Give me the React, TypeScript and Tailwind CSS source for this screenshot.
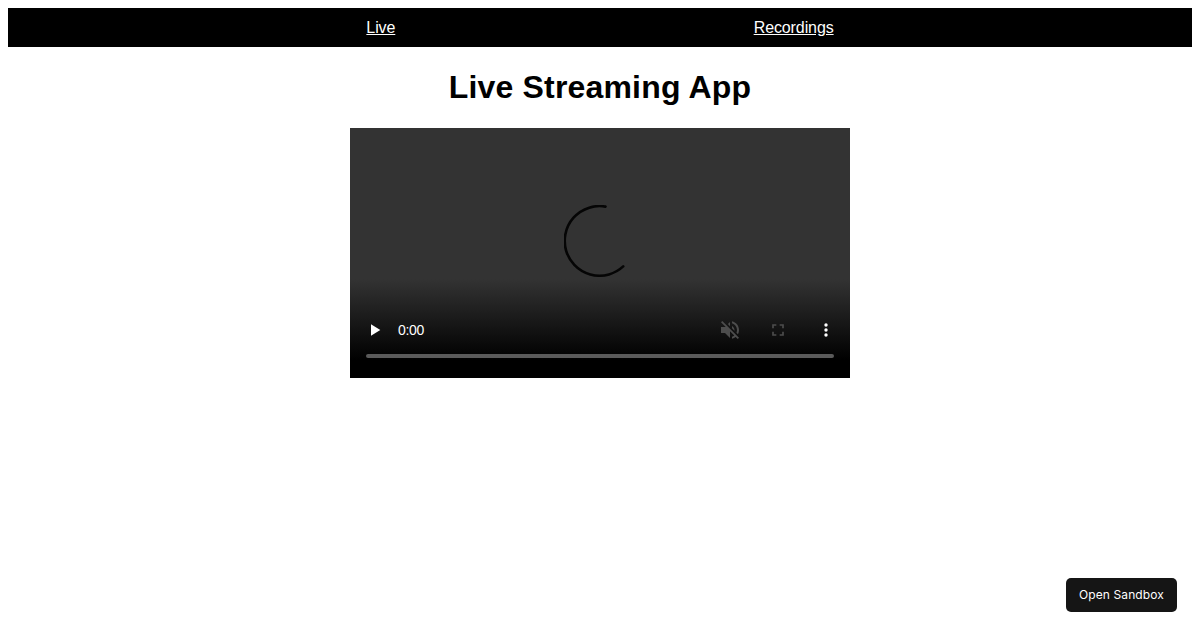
export default function App() {
  return (
    <div className="min-h-[630px] bg-white p-2 font-['Helvetica',Arial,sans-serif] text-black">
      <nav className="flex h-[39px] items-center justify-evenly bg-black text-base tracking-[-0.1px] text-white">
        <a href="#live" className="underline">
          Live
        </a>
        <a href="#recordings" className="underline">
          Recordings
        </a>
      </nav>

      <h1 className="mt-[22px] mb-[22px] text-center text-[32px] leading-[37px] font-bold tracking-[0.17px]">
        Live Streaming App
      </h1>

      <div className="mx-auto flex h-[250px] w-[500px] flex-col justify-between bg-[linear-gradient(to_bottom,#333333_0px,#333333_151px,#000000_232px)]">
        <div className="flex justify-center pt-[77px]">
          {/* loading spinner */}
          <svg width="72" height="72" viewBox="0 0 72 72" fill="none">
            <path
              d="M41.5 1.6 A 34.8 34.8 0 1 0 59.2 61.4"
              stroke="#050505"
              strokeWidth="2.6"
              strokeLinecap="round"
            />
          </svg>
        </div>

        <div className="flex flex-col px-4 pb-[20px]">
          <div className="flex items-center">
            <svg width="12" height="14" viewBox="0 0 12 14" className="ml-[4px]">
              <path d="M1 1.3 V12.7 L10.3 7 Z" fill="#ffffff" />
            </svg>
            <span className="ml-[16px] text-sm leading-4 tracking-[-0.3px] text-white">0:00</span>

            {/* muted, disabled */}
            <svg width="24" height="24" viewBox="0 0 24 24" fill="#4d4d4d" className="ml-auto mr-[26px]">
              <path d="M16.5 12c0-1.77-1.02-3.29-2.5-4.03v2.21l2.45 2.45c.03-.2.05-.41.05-.63zm2.5 0c0 .94-.2 1.82-.54 2.64l1.51 1.51C20.63 14.91 21 13.5 21 12c0-4.28-2.99-7.86-7-8.77v2.06c2.89.86 5 3.54 5 6.71zM4.27 3L3 4.27 7.73 9H3v6h4l5 5v-6.73l4.25 4.25c-.67.52-1.42.93-2.25 1.18v2.06c1.38-.31 2.63-.95 3.69-1.81L19.73 21 21 19.73l-9-9L4.27 3zM12 4L9.91 6.09 12 8.18V4z" />
            </svg>
            {/* fullscreen, disabled */}
            <svg width="20" height="20" viewBox="0 0 24 24" fill="#4d4d4d" className="mr-[36px]">
              <path d="M7 14H5v5h5v-2H7v-3zm-2-4h2V7h3V5H5v5zm12 7h-3v2h5v-5h-2v3zM14 5v2h3v3h2V5h-5z" />
            </svg>
            <svg width="4" height="14" viewBox="0 0 4 14" fill="#ffffff" className="mr-[6px]">
              <circle cx="2" cy="2" r="1.7" />
              <circle cx="2" cy="7" r="1.7" />
              <circle cx="2" cy="12" r="1.7" />
            </svg>
          </div>
          <div className="mt-[12px] h-1 rounded-full bg-[#5a5a5a]"></div>
        </div>
      </div>

      <button className="fixed right-[23px] bottom-[18px] h-[34px] w-[111px] rounded-[5px] bg-[#151515] font-['Inter',sans-serif] text-xs tracking-[0.1px] text-white">
        Open Sandbox
      </button>
    </div>
  );
}
